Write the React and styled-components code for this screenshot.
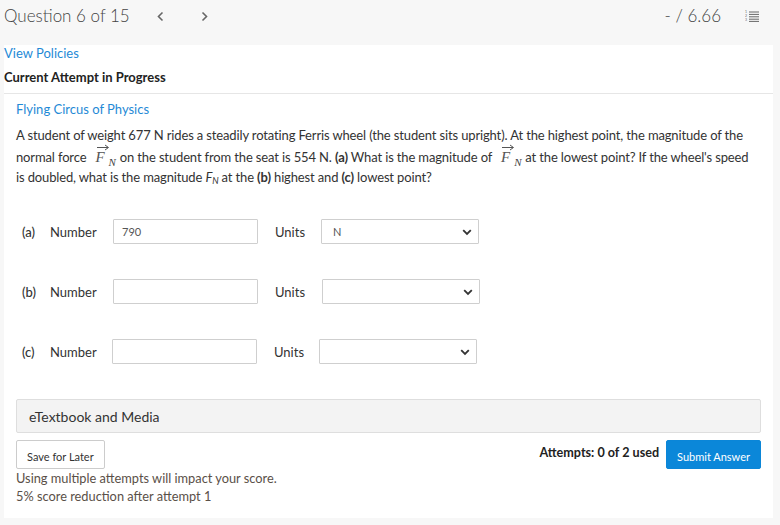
import React from "react";
import styled, { createGlobalStyle } from "styled-components";

const Global = createGlobalStyle`
  html, body { margin: 0; padding: 0; background: #f7f7f7; }
  body { font-family: Lato, "Open Sans", sans-serif; color: #333; }
  * { box-sizing: border-box; }
`;

const Page = styled.div`
  width: 780px;
  height: 525px;
  overflow: hidden;
  background: #f7f7f7;
`;

const Header = styled.header`
  height: 45px;
  display: flex;
  align-items: flex-start;
  padding: 5px 20px 0 4px;
`;

const Title = styled.h1`
  margin: 0;
  font-size: 17px;
  font-weight: 300;
  line-height: 22px;
  color: #444;
`;

const NavBtn = styled.span`
  display: inline-flex;
  width: 10px;
  height: 22px;
  align-items: center;
  justify-content: center;
  margin-left: ${(p) => p.$ml}px;
`;

const Spacer = styled.div`
  flex: 1;
`;

const Score = styled.span`
  font-size: 17px;
  font-weight: 300;
  line-height: 22px;
  color: #444;
`;

const ListIcon = styled.span`
  display: inline-flex;
  margin-left: 24px;
  height: 22px;
  align-items: center;
`;

const Panel = styled.main`
  background: #fff;
  margin: 0 7px 0 4px;
  height: 473px;
  display: flex;
  flex-direction: column;
`;

const Link = styled.a`
  color: #1f8ad6;
  font-size: 13px;
  line-height: 16px;
  text-decoration: none;
  display: block;
`;

const Attempt = styled.div`
  font-size: 13px;
  font-weight: 700;
  color: #222;
  line-height: 16px;
  margin-top: 8px;
  padding-bottom: 8px;
  border-bottom: 1px solid #e6e6e6;
`;

const Body = styled.section`
  padding: 7px 12px 0 12px;
  display: flex;
  flex-direction: column;
`;

const QText = styled.p`
  margin: 8px 0 0 0;
  font-size: 13px;
  line-height: 21px;
  color: #333;
  letter-spacing: -0.14px;
`;

const Line = styled.span`
  display: block;
  white-space: nowrap;
  line-height: ${(p) => p.$lh || 21}px;
`;

const Vec = styled.span`
  position: relative;
  display: inline-block;
  font-family: "Liberation Serif", "DejaVu Serif", serif;
  font-style: italic;
  font-size: 15px;
  color: #555;
  margin: 0 4px 0 6px;
  line-height: 14px;
`;

const VecArrow = styled.svg`
  position: absolute;
  left: 0;
  top: -6px;
`;

const Sub = styled.span`
  font-family: "Liberation Serif", "DejaVu Serif", serif;
  font-style: italic;
  font-size: 11px;
  color: #444;
  position: relative;
  top: 4px;
  margin-right: 4px;
`;

const SubSmall = styled.sub`
  font-size: 9px;
  font-style: italic;
  vertical-align: -2px;
`;

const Rows = styled.div`
  display: flex;
  flex-direction: column;
  gap: 35px;
  margin-top: 30px;
  padding-left: 6px;
`;

const Row = styled.div`
  display: flex;
  align-items: center;
  height: 25px;
`;

const Part = styled.span`
  width: 28px;
  font-size: 13px;
  font-weight: 500;
  color: #333;
`;

const Label = styled.span`
  width: ${(p) => p.$w}px;
  margin-left: ${(p) => p.$ml || 0}px;
  font-size: 13px;
  color: #333;
`;

const Input = styled.div`
  width: 145px;
  height: 25px;
  border: 1px solid #cfcfcf;
  border-radius: 1px;
  font-size: 11px;
  color: #555;
  display: flex;
  align-items: center;
  padding-left: 8px;
  margin-left: ${(p) => p.$ml || 0}px;
`;

const Select = styled.div`
  position: relative;
  width: 158px;
  height: 25px;
  border: 1px solid #cfcfcf;
  border-radius: 1px;
  font-size: 11px;
  color: #555;
  display: flex;
  align-items: center;
  padding-left: 11px;
  margin-left: ${(p) => p.$ml || 0}px;
`;

const Caret = styled.svg`
  position: absolute;
  right: 6px;
  top: 9px;
`;

const Media = styled.div`
  margin-top: 35px;
  height: 34px;
  background: #f3f3f3;
  border: 1px solid #dedede;
  border-radius: 2px;
  font-size: 14px;
  color: #333;
  display: flex;
  align-items: center;
  padding-left: 12px;
`;

const Footer = styled.div`
  display: flex;
  align-items: flex-start;
  margin-top: 7px;
`;

const FootLeft = styled.div`
  flex: 1;
  display: flex;
  flex-direction: column;
  align-items: flex-start;
`;

const Button = styled.button`
  height: 29px;
  padding: 3px ${(p) => p.$px}px 0;
  font-family: Lato, sans-serif;
  font-size: 11px;
  border-radius: 2px;
  border: 1px solid ${(p) => (p.$primary ? "#0b86d8" : "#cccccc")};
  background: ${(p) => (p.$primary ? "#0b87d9" : "#fff")};
  color: ${(p) => (p.$primary ? "#fff" : "#333")};
`;

const Note = styled.div`
  font-size: 12.8px;
  line-height: 18px;
  color: #5a5048;
`;

const AttemptsUsed = styled.span`
  font-size: 12.6px;
  font-weight: 700;
  color: #222;
  margin: 5px 7px 0 0;
`;

function VectorF() {
  return (
    <Vec>
      <VecArrow width="14" height="7" viewBox="0 0 14 7">
        <path d="M1 3.5 H12" stroke="#555" strokeWidth="1" />
        <path d="M9 1 L12.5 3.5 L9 6" stroke="#555" strokeWidth="1" fill="none" />
      </VecArrow>
      F
    </Vec>
  );
}

function Chevron({ dir }) {
  return (
    <svg width="7" height="11" viewBox="0 0 7 11">
      <path
        d={dir === "left" ? "M5.5 1.5 L1.5 5.5 L5.5 9.5" : "M1.5 1.5 L5.5 5.5 L1.5 9.5"}
        stroke="#666"
        strokeWidth="1.6"
        fill="none"
      />
    </svg>
  );
}

function AnswerRow({ part, value, unit, inputMl, selectMl }) {
  return (
    <Row>
      <Part>({part})</Part>
      <Label $w={63}>Number</Label>
      <Input $ml={inputMl}>{value}</Input>
      <Label $w={46} $ml={17}>Units</Label>
      <Select $ml={selectMl}>
        {unit}
        <Caret width="10" height="7" viewBox="0 0 10 7">
          <path d="M1.2 1.2 L5 5 L8.8 1.2" stroke="#333" strokeWidth="1.8" fill="none" />
        </Caret>
      </Select>
    </Row>
  );
}

export default function App() {
  return (
    <Page>
      <Global />
      <Header>
        <Title>Question 6 of 15</Title>
        <NavBtn $ml={26}><Chevron dir="left" /></NavBtn>
        <NavBtn $ml={34}><Chevron dir="right" /></NavBtn>
        <Spacer />
        <Score>- / 6.66</Score>
        <ListIcon>
          <svg width="15" height="12" viewBox="0 0 15 12">
            <text x="0" y="3.3" fontSize="3.5" fill="#666" fontFamily="Lato">1</text>
            <text x="0" y="7.3" fontSize="3.5" fill="#666" fontFamily="Lato">2</text>
            <text x="0" y="11.3" fontSize="3.5" fill="#666" fontFamily="Lato">3</text>
            <path d="M4 2 H14 M4 4.4 H14 M4 6.8 H14 M4 9.2 H14 M4 11.4 H14" stroke="#666" strokeWidth="1" />
          </svg>
        </ListIcon>
      </Header>
      <Panel>
        <Link href="#">View Policies</Link>
        <Attempt>Current Attempt in Progress</Attempt>
        <Body>
          <Link href="#">Flying Circus of Physics</Link>
          <QText>
            <Line>
              A student of weight 677 N rides a steadily rotating Ferris wheel (the student sits upright). At the highest point, the magnitude of the
            </Line>
            <Line $lh={22}>
              normal force <VectorF /><Sub>N</Sub>on the student from the seat is 554 N. <b>(a)</b> What is the magnitude of <VectorF /><Sub>N</Sub>at the lowest point? If the wheel's speed
            </Line>
            <Line $lh={17}>
              is doubled, what is the magnitude <i>F</i><SubSmall>N</SubSmall> at the <b>(b)</b> highest and <b>(c)</b> lowest point?
            </Line>
          </QText>
          <Rows>
            <AnswerRow part="a" value="790" unit="N" inputMl={0} selectMl={0} />
            <AnswerRow part="b" value="" unit="" inputMl={0} selectMl={1} />
            <AnswerRow part="c" value="" unit="" inputMl={-1} selectMl={-1} />
          </Rows>
          <Media>eTextbook and Media</Media>
          <Footer>
            <FootLeft>
              <Button $px={10}>Save for Later</Button>
              <Note>Using multiple attempts will impact your score.</Note>
              <Note>5% score reduction after attempt 1</Note>
            </FootLeft>
            <AttemptsUsed>Attempts: 0 of 2 used</AttemptsUsed>
            <Button $primary $px={10}>Submit Answer</Button>
          </Footer>
        </Body>
      </Panel>
    </Page>
  );
}
